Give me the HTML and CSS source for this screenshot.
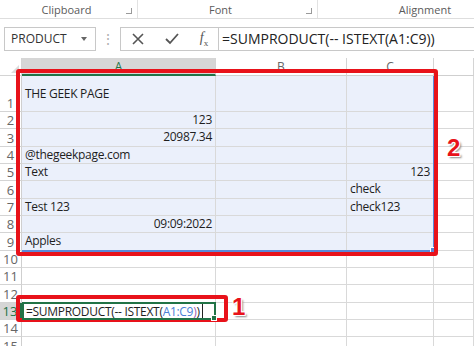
FILE: index.html
```html
<!DOCTYPE html>
<html lang="en">
<head>
    <meta charset="UTF-8">
    <title>SUMPRODUCT ISTEXT</title>
    <link rel="stylesheet" href="styles.css">
</head>
<body>
    <div class="page">
        <div class="ribbon">
            <div class="group g1"><span>Clipboard</span><i class="launch"></i></div>
            <div class="group g2"><span>Font</span><i class="launch"></i></div>
            <div class="group g3"><span>Alignment</span></div>
        </div>

        <div class="fbar">
            <div class="namebox">PRODUCT<span class="caret"></span></div>
            <div class="dots">⋮</div>
            <div class="fx-btns">
                <svg width="14" height="14" viewBox="0 0 14 14"><path d="M2 2 L12 12 M12 2 L2 12" stroke="#555" stroke-width="1.6" fill="none"/></svg>
                <svg width="16" height="14" viewBox="0 0 16 14"><path d="M2 7 L6 11 L14 2" stroke="#555" stroke-width="1.8" fill="none"/></svg>
                <span class="fx"><i>f</i><sub>x</sub></span>
            </div>
            <div class="formula">=SUMPRODUCT(-- ISTEXT(A1:C9))</div>
        </div>

        <div class="sheet">
            <div class="corner"><i></i></div><div class="ch active">A</div><div class="ch">B</div><div class="ch">C</div><div class="ch"></div>

            <div class="rh tall">1</div><div class="c sel tall">THE GEEK PAGE</div><div class="c sel"></div><div class="c sel"></div><div class="c"></div>
            <div class="rh">2</div><div class="c sel r">123</div><div class="c sel"></div><div class="c sel"></div><div class="c"></div>
            <div class="rh">3</div><div class="c sel r">20987.34</div><div class="c sel"></div><div class="c sel"></div><div class="c"></div>
            <div class="rh">4</div><div class="c sel">@thegeekpage.com</div><div class="c sel"></div><div class="c sel"></div><div class="c"></div>
            <div class="rh">5</div><div class="c sel">Text</div><div class="c sel"></div><div class="c sel r">123</div><div class="c"></div>
            <div class="rh">6</div><div class="c sel"></div><div class="c sel"></div><div class="c sel">check</div><div class="c"></div>
            <div class="rh">7</div><div class="c sel">Test 123</div><div class="c sel"></div><div class="c sel">check123</div><div class="c"></div>
            <div class="rh">8</div><div class="c sel r">09:09:2022</div><div class="c sel"></div><div class="c sel"></div><div class="c"></div>
            <div class="rh">9</div><div class="c sel">Apples</div><div class="c sel"></div><div class="c sel"></div><div class="c"></div>
            <div class="rh">10</div><div class="c"></div><div class="c"></div><div class="c"></div><div class="c"></div>
            <div class="rh">11</div><div class="c"></div><div class="c"></div><div class="c"></div><div class="c"></div>
            <div class="rh">12</div><div class="c"></div><div class="c"></div><div class="c"></div><div class="c"></div>
            <div class="rh active">13</div><div class="c edit">=SUMPRODUCT(-- ISTEXT(<span class="ref">A1:C9</span><span class="p1">)</span>)<span class="cursor"></span><i class="handle"></i></div><div class="c"></div><div class="c"></div><div class="c"></div>
            <div class="rh">14</div><div class="c"></div><div class="c"></div><div class="c"></div><div class="c"></div>
            <div class="rh">15</div><div class="c"></div><div class="c"></div><div class="c"></div><div class="c"></div>
        </div>

        <!-- overlays -->
        <div class="selbox"><i></i></div>
        <div class="callout box2"></div>
        <div class="callout box1"></div>
        <div class="num n2">2</div>
        <div class="num n1">1</div>
    </div>
</body>
</html>
```

FILE: styles.css
```css
body {
    margin: 0;
    background: #ffffff;
    font-family: "Open Sans", "Noto Sans", sans-serif;
}

.page {
    position: relative;
    width: 474px;
    height: 346px;
    overflow: hidden;
}

/* ribbon group labels */
.ribbon {
    display: flex;
    height: 18px;
    border-bottom: 1px solid #dedede;
    font-size: 11px;
    color: #5b5b5b;
}

.group {
    position: relative;
    display: flex;
    justify-content: center;
    align-items: center;
    border-right: 1px solid #e2e2e2;
    height: 18px;
    box-sizing: border-box;
}

.g1 { width: 138px; padding-right: 4px; }
.g2 { width: 180px; padding-right: 14px; }
.g3 { flex: 1; border-right: 0; padding-left: 58px; }

.launch {
    position: absolute;
    right: 5px;
    top: 8px;
    width: 5px;
    height: 5px;
    border-right: 1px solid #9a9a9a;
    border-bottom: 1px solid #9a9a9a;
}

/* formula bar */
.fbar {
    display: flex;
    align-items: center;
    height: 39px;
    padding-left: 4px;
}

.namebox {
    position: relative;
    width: 92px;
    height: 24px;
    box-sizing: border-box;
    border: 1px solid #c8c8c8;
    font-size: 12px;
    line-height: 22px;
    padding-left: 6px;
    color: #333;
}

.caret {
    position: absolute;
    right: 8px;
    top: 9px;
    border-left: 3px solid transparent;
    border-right: 3px solid transparent;
    border-top: 4px solid #666;
}

.dots {
    width: 24px;
    text-align: center;
    color: #b0b0b0;
    font-size: 14px;
}

.fx-btns {
    display: flex;
    align-items: center;
    justify-content: space-around;
    width: 98px;
    height: 24px;
    box-sizing: border-box;
    border: 1px solid #c8c8c8;
    border-right: 0;
}

.fx {
    font-family: "Liberation Serif", serif;
    font-size: 14px;
    color: #555;
}

.fx sub {
    font-size: 9px;
}

.formula {
    flex: 1;
    height: 24px;
    box-sizing: border-box;
    border: 1px solid #c8c8c8;
    border-right: 0;
    font-size: 14px;
    line-height: 22px;
    padding-left: 3px;
    color: #222;
}

/* grid */
.sheet {
    display: grid;
    grid-template-columns: 22px 194px 131px 87px 40px;
    grid-template-rows: 18px 36px repeat(15, 17.35px);
    font-size: 12px;
    letter-spacing: -0.3px;
    color: #1e1e1e;
}

.corner {
    position: relative;
    border-right: 1px solid #d4d4d4;
    border-bottom: 1px solid #d4d4d4;
}

.corner i {
    position: absolute;
    right: 2px;
    bottom: 2px;
    border-left: 8px solid transparent;
    border-bottom: 8px solid #dcdcdc;
}

.ch {
    border-right: 1px solid #d4d4d4;
    border-bottom: 1px solid #cfcfcf;
    text-align: center;
    font-size: 12px;
    letter-spacing: 0;
    line-height: 17px;
    color: #666;
}

.ch.active {
    background: #d6d6d6;
    color: #217346;
    border-bottom: 2px solid #217346;
}

.rh {
    border-right: 1px solid #cfcfcf;
    border-bottom: 1px solid #d4d4d4;
    font-size: 13px;
    letter-spacing: 0;
    color: #666;
    display: flex;
    align-items: flex-end;
    justify-content: center;
    line-height: 16px;
}

.rh.active {
    background: #d6d6d6;
    color: #217346;
    border-right: 2px solid #217346;
}

.c {
    border-right: 1px solid #d9d9d9;
    border-bottom: 1px solid #d9d9d9;
    padding: 0 3px;
    line-height: 16px;
    white-space: nowrap;
}

.c.tall {
    display: flex;
    align-items: center;
}

.c.r {
    text-align: right;
}

.c.sel {
    background: #ebf0fb;
}

.c.edit {
    position: relative;
    z-index: 1;
    border: 2px solid #217346;
    margin-top: -1px;
    line-height: 14px;
    padding-left: 2px;
}

.handle {
    position: absolute;
    right: -3px;
    bottom: -3px;
    width: 4px;
    height: 4px;
    background: #217346;
    border: 1px solid #fff;
}

.ref {
    color: #4a7fd6;
}

.p1 {
    color: #9a5fb5;
}

.cursor {
    display: inline-block;
    width: 1px;
    height: 14px;
    background: #222;
    vertical-align: -2px;
    margin-left: 2px;
}

/* overlays */
.selbox {
    position: absolute;
    left: 22px;
    top: 76px;
    width: 411px;
    height: 174px;
    border-right: 2px solid #5b88d8;
    border-bottom: 2px solid #5b88d8;
}

.selbox i {
    position: absolute;
    right: -4px;
    bottom: -4px;
    width: 5px;
    height: 5px;
    background: #5b88d8;
    border: 1px solid #fff;
}

.callout {
    position: absolute;
    border: 4px solid #e8121a;
    border-radius: 3px;
    box-sizing: border-box;
}

.box2 {
    left: 16px;
    top: 69px;
    width: 422px;
    height: 187px;
}

.box1 {
    left: 16px;
    top: 295px;
    width: 212px;
    height: 27px;
}

.num {
    position: absolute;
    font-family: "Liberation Sans", sans-serif;
    font-weight: bold;
    font-size: 24px;
    color: #e8121a;
    text-shadow: -1px -1px 0 #fff, 1px -1px 0 #fff, -1px 1px 0 #fff, 1px 1px 0 #fff, 2px 2px 2px #888;
}

.n2 {
    left: 447px;
    top: 134px;
}

.n1 {
    left: 232px;
    top: 293px;
}
```
